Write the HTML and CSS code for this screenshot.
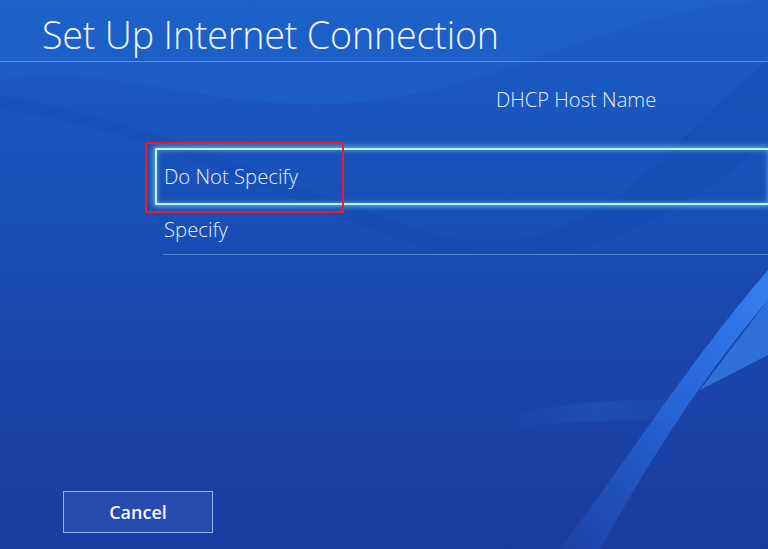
FILE: index.html
```html
<!DOCTYPE html>
<html lang="en">
<head>
<meta charset="utf-8">
<title>Set Up Internet Connection</title>
<link rel="stylesheet" href="styles.css">
</head>
<body>
<div class="screen">
  <svg class="bg-waves" viewBox="0 0 768 549" preserveAspectRatio="none" aria-hidden="true">
    <defs>
      <linearGradient id="w1" x1="0" y1="0" x2="1" y2="0">
        <stop offset="0" stop-color="#2a6fd6" stop-opacity="0"/>
        <stop offset="0.5" stop-color="#2a6fd6" stop-opacity="0.45"/>
        <stop offset="1" stop-color="#2a6fd6" stop-opacity="0.1"/>
      </linearGradient>
      <linearGradient id="w2" x1="0" y1="1" x2="1" y2="0">
        <stop offset="0" stop-color="#2d6ee8" stop-opacity="0.1"/>
        <stop offset="0.6" stop-color="#2f78f0" stop-opacity="0.7"/>
        <stop offset="1" stop-color="#3b86f5" stop-opacity="0.9"/>
      </linearGradient>
    </defs>
    <path d="M0 80 C120 60 220 120 380 100 C520 80 620 10 768 0 L768 0 L0 0 Z" fill="#1d64cc" opacity="0.5"/>
    <path d="M0 95 C140 120 250 170 420 230 C520 260 600 230 700 120 L768 60 L768 140 C650 250 520 280 400 240 C260 190 120 120 0 110 Z" fill="#1548b0" opacity="0.35"/>
    <path d="M560 549 C620 470 690 360 768 270 L768 300 C700 380 650 460 600 549 Z" fill="url(#w2)"/>
    <path d="M700 390 L768 355 L768 300 Z" fill="#3f8cf7" opacity="0.6"/>
    <path d="M500 420 C560 400 620 400 690 400 L680 420 C620 420 560 420 500 430 Z" fill="url(#w1)" opacity="0.5"/>
  </svg>

  <header class="title-bar">
    <h1 class="title">Set Up Internet Connection</h1>
  </header>

  <main class="content">
    <div class="subtitle">DHCP Host Name</div>
    <ul class="options">
      <li class="option selected">
        <span class="highlight"></span>
        Do Not Specify
      </li>
      <li class="option">Specify</li>
    </ul>
  </main>

  <footer class="footer">
    <button class="cancel">Cancel</button>
  </footer>
</div>
</body>
</html>
```
FILE: styles.css
```css
html, body {
  margin: 0;
  padding: 0;
  width: 768px;
  height: 549px;
  overflow: hidden;
}
body {
  font-family: "Open Sans", "Noto Sans", sans-serif;
  color: #e8f0ff;
}
.screen {
  position: relative;
  width: 768px;
  height: 549px;
  overflow: hidden;
  background: linear-gradient(180deg, #1c5ec6 0%, #1a52bb 30%, #1947ad 60%, #1a3c9f 100%);
  display: flex;
  flex-direction: column;
}
.bg-waves {
  position: absolute;
  inset: 0;
  width: 768px;
  height: 549px;
  z-index: 0;
}
.title-bar, .content, .footer { position: relative; z-index: 1; }

.title-bar {
  height: 62px;
  border-bottom: 1px solid rgba(120, 170, 240, 0.7);
  box-sizing: border-box;
  padding-left: 42px;
}
.title {
  margin: 0;
  font-weight: 300;
  font-size: 37.7px;
  line-height: 1;
  padding-top: 16px;
  color: #eef4ff;
  letter-spacing: -0.2px;
}
.content {
  flex: 1;
  padding-left: 155px;
}
.subtitle {
  margin-left: 341px;
  margin-top: 25px;
  font-size: 20.2px;
  font-weight: 300;
  line-height: 24px;
  color: #e6eefc;
}
.options {
  list-style: none;
  margin: 0;
  padding: 0;
  margin-top: 37px;
}
.option {
  position: relative;
  height: 50px;
  box-sizing: border-box;
  padding-left: 9px;
  display: flex;
  align-items: center;
  font-size: 20.3px;
  font-weight: 300;
  color: #e8f0ff;
}
.option.selected {
  height: 57px;
  border: 2px solid #c9f2ff;
  border-right: none;
  box-shadow: 0 0 6px 1px rgba(120, 220, 255, 0.8), inset 0 0 5px rgba(120, 220, 255, 0.6);
  padding-left: 7px;
  padding-bottom: 2px;
}
.option:not(.selected) {
  margin-left: 8px;
  padding-left: 1px;
  padding-bottom: 2px;
  border-bottom: 1px solid rgba(120, 170, 240, 0.6);
}
.highlight {
  position: absolute;
  left: -12px;
  top: -8px;
  width: 195px;
  height: 67px;
  border: 2px solid #ee1c25;
}
.footer {
  padding: 0 0 16px 63px;
}
.cancel {
  width: 150px;
  height: 42px;
  border: 1px solid rgba(170, 200, 255, 0.85);
  background: rgba(60, 100, 200, 0.35);
  color: #f2f6ff;
  font-family: "Open Sans", "Noto Sans", sans-serif;
  font-size: 18px;
  font-weight: 600;
  cursor: pointer;
}
```
